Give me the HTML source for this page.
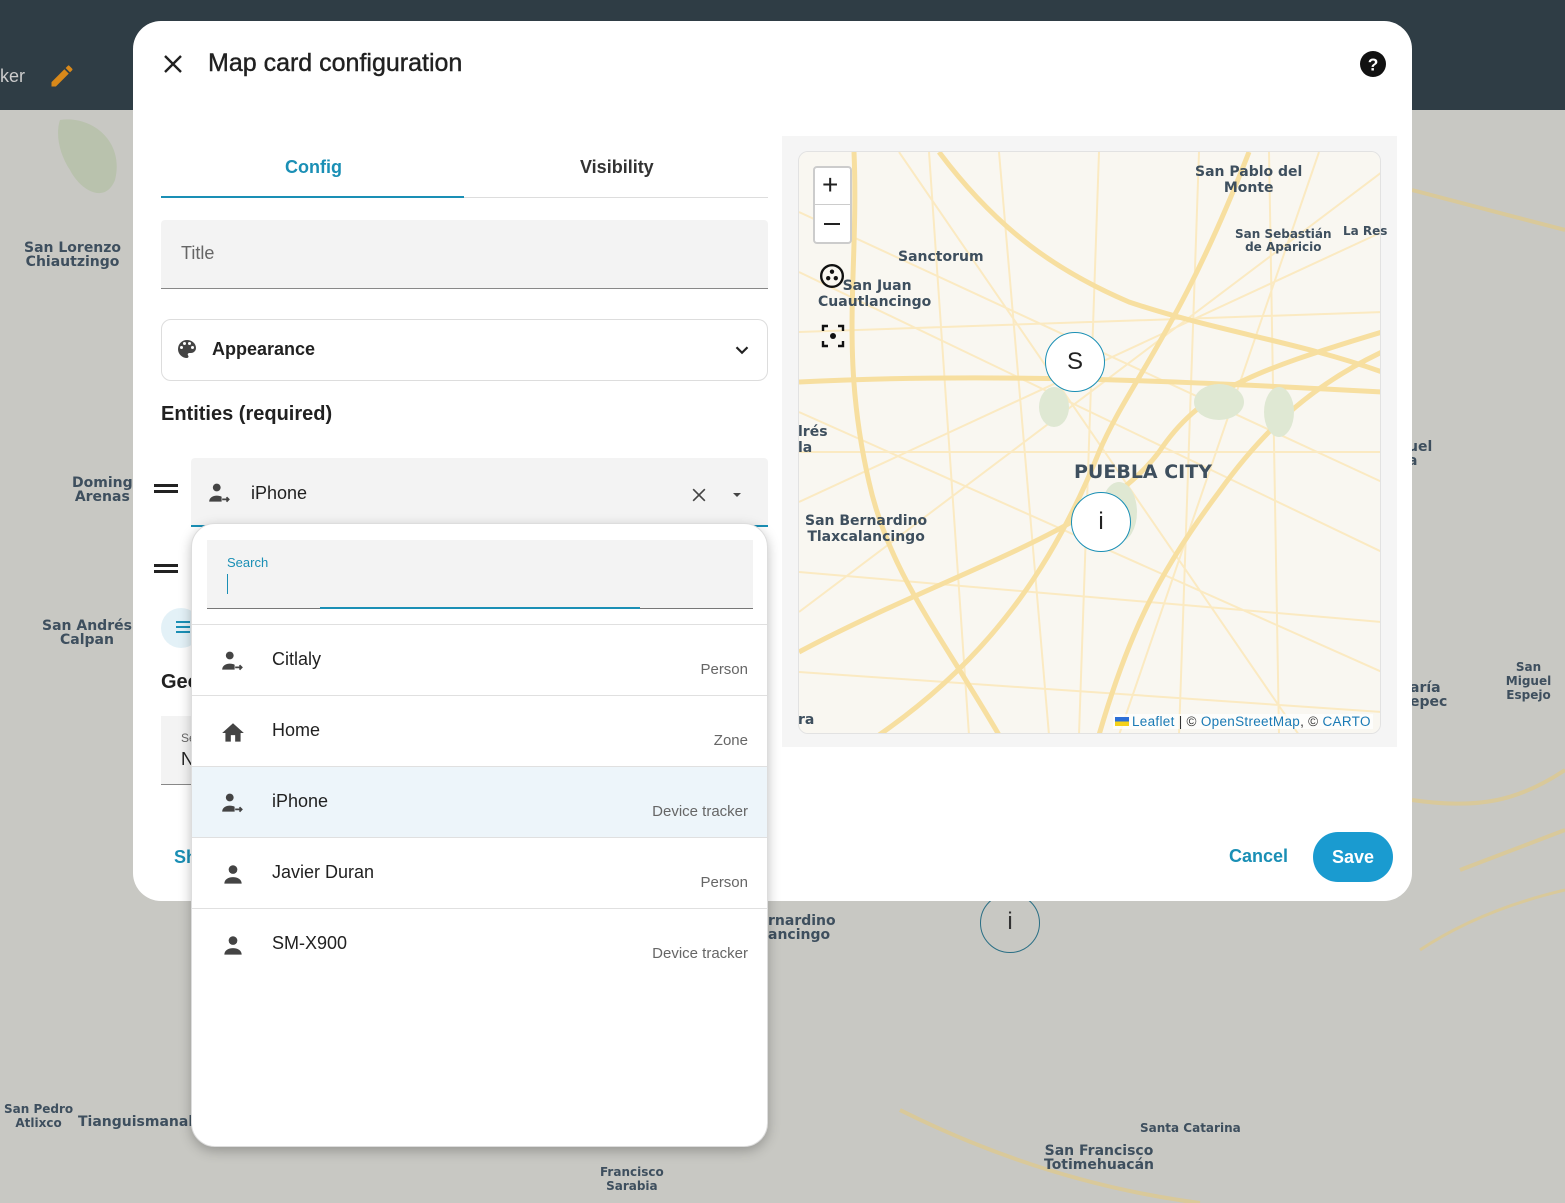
<!DOCTYPE html>
<html><head><meta charset="utf-8"><style>
*{box-sizing:border-box;margin:0;padding:0}
body{width:1565px;height:1203px;position:relative;overflow:hidden;font-family:"Liberation Sans",sans-serif;background:#c9c9c4}
.abs{position:absolute}
.mlbl{position:absolute;font-family:"DejaVu Sans",sans-serif;font-weight:bold;color:#3e4f5e;font-size:13px;line-height:14px;text-align:center}
.dlg{left:133px;top:21px;width:1279px;height:880px;background:#fff;border-radius:28px}
.t{position:absolute;color:#212121}
.item{position:absolute;left:0;width:576px;height:71px;border-top:1px solid #e0e0e0}
.item .n{position:absolute;left:80px;top:24px;font-size:18px;color:#212121}
.item .s{position:absolute;right:20px;top:36px;font-size:15px;color:#666}
.item svg{position:absolute;left:28px;top:24px}
</style></head><body>
<svg class="abs" style="left:0;top:110px" width="1565" height="1093">
<rect width="1565" height="1093" fill="#c8c8c3"/>
<path d="M60 10 C90 5 125 30 115 70 C105 95 80 80 70 60 C60 45 55 25 60 10Z" fill="#b9c2ad"/>
<path d="M1412 80 L1565 120 M1412 690 C1480 700 1520 690 1565 660 M1460 760 L1565 720 M900 1000 C1000 1050 1100 1080 1200 1093" stroke="#d9c99a" stroke-width="4" fill="none"/>
<path d="M1420 840 Q1480 800 1565 780" stroke="#d9c99a" stroke-width="3" fill="none"/>
</svg>
<div class="abs" style="left:0;top:0;width:1565px;height:110px;background:#2f3d45"></div>
<div class="t" style="left:0;top:66px;font-size:18px;color:#ccc">ker</div>
<svg class="abs" style="left:48px;top:62px" width="28" height="28" viewBox="0 0 24 24"><path d="M3 17.25V21h3.75L17.8 9.94l-3.75-3.75zM20.7 7.04a1 1 0 000-1.41l-2.34-2.34a1 1 0 00-1.41 0l-1.83 1.83 3.75 3.75z" fill="#d9891a"/></svg>
<div class="mlbl" style="left:24px;top:241px;font-size:14px">San Lorenzo<br>Chiautzingo</div>
<div class="mlbl" style="left:72px;top:476px;font-size:14px">Doming<br>Arenas</div>
<div class="mlbl" style="left:42px;top:619px;font-size:14px">San Andrés<br>Calpan</div>
<div class="mlbl" style="left:1408px;top:440px;text-align:left;font-size:14px">uel<br>a</div>
<div class="mlbl" style="left:1410px;top:681px;text-align:left;font-size:14px">aría<br>epec</div>
<div class="mlbl" style="left:1492px;top:660px;font-size:12px">San Miguel<br>Espejo</div>
<div class="mlbl" style="left:4px;top:1102px;font-size:12px">San Pedro<br>Atlixco</div>
<div class="mlbl" style="left:78px;top:1115px;font-size:14px">Tianguismanal</div>
<div class="mlbl" style="left:768px;top:914px;text-align:left;font-size:14px">rnardino<br>ancingo</div>
<div class="mlbl" style="left:1140px;top:1121px;font-size:12px">Santa Catarina</div>
<div class="mlbl" style="left:1044px;top:1144px;font-size:14px">San Francisco<br>Totimehuacán</div>
<div class="mlbl" style="left:600px;top:1165px;font-size:12px">Francisco<br>Sarabia</div>
<div class="abs" style="left:980px;top:893px;width:60px;height:60px;border-radius:50%;border:1.5px solid #2a6f85;font-size:24px;text-align:center;line-height:56px;color:#333">i</div>

<div class="abs dlg">
<svg class="abs" style="left:28px;top:31px" width="24" height="24" viewBox="0 0 24 24"><path d="M4 4L20 20M20 4L4 20" stroke="#212121" stroke-width="2.4"/></svg>
<div class="t" style="left:75px;top:28px;font-size:25px;-webkit-text-stroke:0.4px #212121">Map card configuration</div>
<svg class="abs" style="left:1227px;top:30px" width="26" height="26" viewBox="0 0 24 24"><circle cx="12" cy="12" r="12" fill="#111"/><text x="12" y="18" font-size="16" font-weight="bold" fill="#fff" text-anchor="middle" font-family="Liberation Sans">?</text></svg>
<div class="t" style="left:152px;top:136px;font-size:18px;color:#1a8fb5;font-weight:bold">Config</div>
<div class="t" style="left:447px;top:136px;font-size:18px;color:#333;font-weight:bold">Visibility</div>
<div class="abs" style="left:28px;top:176px;width:607px;height:1px;background:#ddd"></div>
<div class="abs" style="left:28px;top:175px;width:303px;height:2px;background:#1a8fb5"></div>
<div class="abs" style="left:28px;top:199px;width:607px;height:69px;background:#f3f3f3;border-bottom:1px solid #888;border-radius:4px 4px 0 0"></div>
<div class="t" style="left:48px;top:222px;font-size:18px;color:#666">Title</div>
<div class="abs" style="left:28px;top:298px;width:607px;height:62px;border:1px solid #ddd;border-radius:10px"></div>
<svg class="abs" style="left:42px;top:316px" width="24" height="24" viewBox="0 0 24 24"><path d="M12 3a9 9 0 000 18c.83 0 1.5-.67 1.5-1.5 0-.39-.15-.74-.39-1.01-.23-.26-.38-.61-.38-.99 0-.83.67-1.5 1.5-1.5H16c2.76 0 5-2.24 5-5 0-4.42-4.03-8-9-8zm-5.5 9a1.5 1.5 0 110-3 1.5 1.5 0 010 3zm3-4a1.5 1.5 0 110-3 1.5 1.5 0 010 3zm5 0a1.5 1.5 0 110-3 1.5 1.5 0 010 3zm3 4a1.5 1.5 0 110-3 1.5 1.5 0 010 3z" fill="#444"/></svg>
<div class="t" style="left:79px;top:318px;font-size:18px;font-weight:bold">Appearance</div>
<svg class="abs" style="left:598px;top:318px" width="22" height="22" viewBox="0 0 24 24"><path d="M6 9l6 6 6-6" stroke="#222" stroke-width="2.4" fill="none"/></svg>
<div class="t" style="left:28px;top:382px;font-size:20px;font-weight:bold">Entities (required)</div>
<div class="abs" style="left:21px;top:463px;width:24px;height:3px;background:#222;box-shadow:0 6px 0 #222"></div>
<div class="abs" style="left:21px;top:543px;width:24px;height:3px;background:#222;box-shadow:0 6px 0 #222"></div>
<div class="abs" style="left:58px;top:437px;width:577px;height:69px;background:#f3f3f3;border-bottom:2px solid #1a8fb5;border-radius:4px 4px 0 0"></div>
<svg class="abs" style="left:74px;top:460px" width="26" height="26" viewBox="0 0 24 24"><circle cx="9" cy="6" r="3.6" fill="#444"/><path d="M2 19c0-3.5 3.5-5.5 7-5.5 2 0 3.5.5 4.5 1V19z" fill="#444"/><path d="M14 17h6M18 15l2 2-2 2" stroke="#444" stroke-width="1.6" fill="none"/></svg>
<div class="t" style="left:118px;top:462px;font-size:18px">iPhone</div>
<svg class="abs" style="left:556px;top:464px" width="20" height="20" viewBox="0 0 24 24"><path d="M5 5L19 19M19 5L5 19" stroke="#444" stroke-width="2"/></svg>
<svg class="abs" style="left:596px;top:466px" width="16" height="16" viewBox="0 0 24 24"><path d="M6 9h12l-6 6z" fill="#444"/></svg>
<div class="abs" style="left:28px;top:587px;width:40px;height:40px;border-radius:20px;background:#e3f1f7"></div>
<div class="abs" style="left:43px;top:600px;width:14px;height:2px;background:#1a8fb5;box-shadow:0 5px 0 #1a8fb5,0 10px 0 #1a8fb5"></div>
<div class="t" style="left:28px;top:650px;font-size:20px;font-weight:bold">Geo</div>
<div class="abs" style="left:28px;top:695px;width:60px;height:69px;background:#f3f3f3;border-bottom:1px solid #888"></div>
<div class="t" style="left:48px;top:710px;font-size:12px;color:#666">Se</div>
<div class="t" style="left:48px;top:728px;font-size:18px">N</div>
<div class="t" style="left:41px;top:826px;font-size:18px;color:#1a8fb5;font-weight:bold">Sh</div>
<div class="abs" style="left:649px;top:115px;width:615px;height:611px;background:#f5f5f5"></div>
<svg class="abs" style="left:665px;top:130px;border-radius:10px;border:1px solid #e2e2e2" width="583" height="583">
<rect width="583" height="583" fill="#f9f7f1"/>
<g stroke="#fbeac2" stroke-width="2" fill="none">
<path d="M0 120 L583 400M0 350 L583 80M200 0 L250 583M400 0 L380 583M0 420 L583 470M100 0 L500 583M0 60 L583 330M520 0 L320 583M0 300 L583 300M0 180 L583 160M0 520 L583 560M300 0 L280 583M130 0 L170 583M470 0 L480 583M0 260 L583 520M0 460 L583 20"/>
</g>
<g stroke="#f7dfa0" stroke-width="5" fill="none">
<path d="M140 0 C200 80 260 120 330 150 C420 180 500 190 583 220"/>
<path d="M55 0 C60 120 40 200 70 330 C90 420 140 480 200 583"/>
<path d="M0 500 C150 420 300 380 360 300 C400 240 450 220 583 180"/>
<path d="M300 583 C330 480 360 420 420 340 C470 270 520 230 583 200"/>
<path d="M0 230 C200 220 400 230 583 240"/>
<path d="M80 583 C200 500 260 400 300 300 C330 230 380 180 450 0"/>
</g>
<g fill="#dfe8d3"><ellipse cx="255" cy="255" rx="15" ry="20"/><ellipse cx="420" cy="250" rx="25" ry="18"/><ellipse cx="320" cy="360" rx="18" ry="30"/><ellipse cx="480" cy="260" rx="15" ry="25"/></g>
</svg>
<div class="abs" style="left:680px;top:145px;width:39px;height:78px;background:#fff;border:2px solid #ccc;border-radius:4px"></div>
<div class="abs" style="left:682px;top:183px;width:35px;height:1px;background:#ccc"></div>
<div class="t" style="left:689px;top:146px;font-size:28px;line-height:36px">+</div>
<div class="abs" style="left:691px;top:202px;width:16px;height:2px;background:#222"></div>
<svg class="abs" style="left:686px;top:242px" width="26" height="26" viewBox="0 0 24 24"><circle cx="12" cy="12" r="10" stroke="#111" stroke-width="2.2" fill="none"/><circle cx="12" cy="8" r="2" fill="#111"/><circle cx="8.5" cy="14" r="2" fill="#111"/><circle cx="15.5" cy="14" r="2" fill="#111"/></svg>
<svg class="abs" style="left:688px;top:303px" width="24" height="24" viewBox="0 0 24 24"><path d="M2 7V2h5M17 2h5v5M22 17v5h-5M7 22H2v-5" stroke="#111" stroke-width="2.4" fill="none"/><circle cx="12" cy="12" r="3" fill="#111"/></svg>
<div class="mlbl" style="left:1062px;top:143px;font-size:14px;line-height:16px">San Pablo del<br>Monte</div>
<div class="mlbl" style="left:1102px;top:207px;font-size:12px;line-height:13px">San Sebastián<br>de Aparicio</div>
<div class="mlbl" style="left:1210px;top:203px;font-size:12px">La Res</div>
<div class="mlbl" style="left:765px;top:229px;font-size:14px">Sanctorum</div>
<div class="mlbl" style="left:685px;top:257px;font-size:14px;line-height:16px">&nbsp;San Juan<br>Cuautlancingo</div>
<div class="mlbl" style="left:665px;top:403px;font-size:14px;line-height:16px;text-align:left">lrés<br>la</div>
<div class="mlbl" style="left:941px;top:440px;font-size:19px;line-height:22px">PUEBLA CITY</div>
<div class="mlbl" style="left:672px;top:492px;font-size:14px;line-height:16px">San Bernardino<br>Tlaxcalancingo</div>
<div class="mlbl" style="left:665px;top:692px;font-size:14px">ra</div>
<div class="abs" style="left:912px;top:311px;width:60px;height:60px;border-radius:50%;border:1.5px solid #1a8fb5;background:#fff;font-size:24px;text-align:center;line-height:57px;color:#222">S</div>
<div class="abs" style="left:938px;top:471px;width:60px;height:60px;border-radius:50%;border:1.5px solid #1a8fb5;background:#fff;font-size:24px;text-align:center;line-height:57px;color:#222">i</div>
<div class="t" style="left:980px;top:693px;font-size:13.5px;color:#333;background:rgba(255,255,255,.7);padding:0 2px;letter-spacing:0.3px"><span style="display:inline-block;width:14px;height:9px;background:linear-gradient(#2d6fd6 50%,#f4d11a 50%);margin-right:3px"></span><span style="color:#1a7ab5">Leaflet</span> | © <span style="color:#1a7ab5">OpenStreetMap</span>, © <span style="color:#1a7ab5">CARTO</span></div>
<div class="t" style="left:1096px;top:825px;font-size:18px;color:#1a8fb5;font-weight:bold">Cancel</div>
<div class="abs" style="left:1180px;top:811px;width:80px;height:50px;border-radius:25px;background:#1a9bd0;color:#fff;font-size:18px;font-weight:bold;text-align:center;line-height:50px">Save</div>
</div>

<div class="abs" style="left:191px;top:523px;width:577px;height:624px;background:#fff;border-radius:24px;border:1px solid #ddd;box-shadow:0 4px 12px rgba(0,0,0,.25);overflow:hidden">
<div class="abs" style="left:15px;top:16px;width:546px;height:69px;background:#f3f3f3;border-bottom:1px solid #777"></div>
<div class="abs" style="left:128px;top:83px;width:320px;height:2px;background:#1a8fb5"></div>
<div class="t" style="left:35px;top:31px;font-size:13px;color:#1a8fb5">Search</div>
<div class="abs" style="left:35px;top:50px;width:1px;height:20px;background:#1a8fb5"></div>
<div class="item" style="top:100px"><svg width="26" height="26" viewBox="0 0 24 24"><circle cx="9" cy="6" r="3.6" fill="#444"/><path d="M2 19c0-3.5 3.5-5.5 7-5.5 2 0 3.5.5 4.5 1V19z" fill="#444"/><path d="M14 17h6M18 15l2 2-2 2" stroke="#444" stroke-width="1.6" fill="none"/></svg><div class="n">Citlaly</div><div class="s">Person</div></div>
<div class="item" style="top:171px"><svg width="26" height="26" viewBox="0 0 24 24"><path d="M10 20v-6h4v6h5v-8h3L12 3 2 12h3v8z" fill="#444"/></svg><div class="n">Home</div><div class="s">Zone</div></div>
<div class="item" style="top:242px;background:#edf5fa"><svg width="26" height="26" viewBox="0 0 24 24"><circle cx="9" cy="6" r="3.6" fill="#444"/><path d="M2 19c0-3.5 3.5-5.5 7-5.5 2 0 3.5.5 4.5 1V19z" fill="#444"/><path d="M14 17h6M18 15l2 2-2 2" stroke="#444" stroke-width="1.6" fill="none"/></svg><div class="n">iPhone</div><div class="s">Device tracker</div></div>
<div class="item" style="top:313px"><svg width="26" height="26" viewBox="0 0 24 24"><circle cx="12" cy="7" r="4" fill="#444"/><path d="M4 20c0-4 4-6 8-6s8 2 8 6z" fill="#444"/></svg><div class="n">Javier Duran</div><div class="s">Person</div></div>
<div class="item" style="top:384px"><svg width="26" height="26" viewBox="0 0 24 24"><circle cx="12" cy="7" r="4" fill="#444"/><path d="M4 20c0-4 4-6 8-6s8 2 8 6z" fill="#444"/></svg><div class="n">SM-X900</div><div class="s">Device tracker</div></div>
</div>
</body></html>
